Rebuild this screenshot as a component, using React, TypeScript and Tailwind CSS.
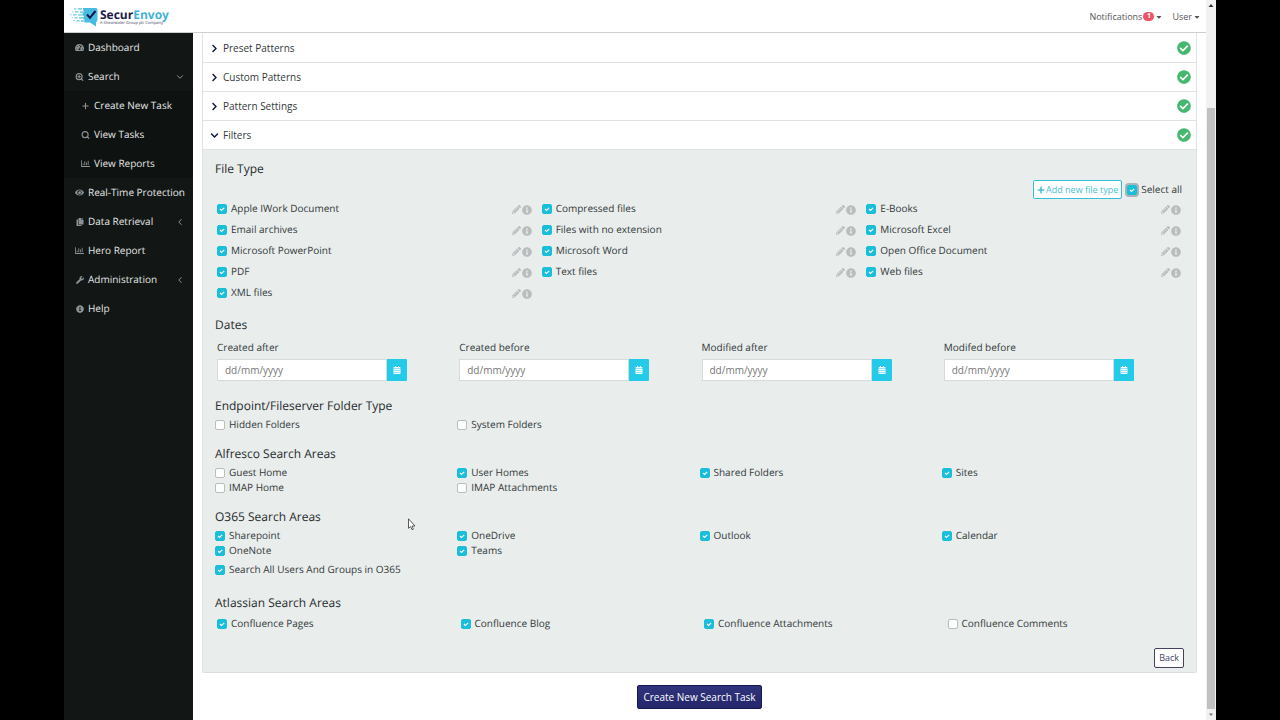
import { useState } from 'react';
import type { ReactNode } from 'react';
import {
  FaCalendarAlt,
  FaCaretDown,
  FaCheckCircle,
  FaChevronDown,
  FaChevronRight,
  FaCopy,
  FaEye,
  FaInfoCircle,
  FaPencilAlt,
  FaPlus,
  FaRegChartBar,
  FaTachometerAlt,
  FaWrench,
} from 'react-icons/fa';
import { ChevronDown, ChevronLeft, Plus, Search, ZoomIn } from 'lucide-react';

interface NavItem {
  label: string;
  icon: ReactNode;
  sub?: boolean;
  arrow?: 'down' | 'left';
}

interface Option {
  label: string;
  checked: boolean;
}

const navItems: NavItem[] = [
  { label: 'Dashboard', icon: <FaTachometerAlt size={9} /> },
  { label: 'Search', icon: <ZoomIn size={10} strokeWidth={3} />, arrow: 'down' },
  { label: 'Create New Task', icon: <Plus size={10} strokeWidth={3} />, sub: true },
  { label: 'View Tasks', icon: <Search size={10} strokeWidth={3} />, sub: true },
  { label: 'View Reports', icon: <FaRegChartBar size={9} />, sub: true },
  { label: 'Real-Time Protection', icon: <FaEye size={9} />, arrow: 'left' },
  { label: 'Data Retrieval', icon: <FaCopy size={8} />, arrow: 'left' },
  { label: 'Hero Report', icon: <FaRegChartBar size={9} /> },
  { label: 'Administration', icon: <FaWrench size={8} />, arrow: 'left' },
  { label: 'Help', icon: <FaInfoCircle size={8} /> },
];

const sections = ['Preset Patterns', 'Custom Patterns', 'Pattern Settings', 'Filters'];

const fileTypes = [
  'Apple IWork Document',
  'Compressed files',
  'E-Books',
  'Email archives',
  'Files with no extension',
  'Microsoft Excel',
  'Microsoft PowerPoint',
  'Microsoft Word',
  'Open Office Document',
  'PDF',
  'Text files',
  'Web files',
  'XML files',
];

const dates = ['Created after', 'Created before', 'Modified after', 'Modifed before'];

const folderTypes: Option[] = [
  { label: 'Hidden Folders', checked: false },
  { label: 'System Folders', checked: false },
];

const alfresco: Option[] = [
  { label: 'Guest Home', checked: false },
  { label: 'User Homes', checked: true },
  { label: 'Shared Folders', checked: true },
  { label: 'Sites', checked: true },
  { label: 'IMAP Home', checked: false },
  { label: 'IMAP Attachments', checked: false },
];

const o365: Option[] = [
  { label: 'Sharepoint', checked: true },
  { label: 'OneDrive', checked: true },
  { label: 'Outlook', checked: true },
  { label: 'Calendar', checked: true },
  { label: 'OneNote', checked: true },
  { label: 'Teams', checked: true },
];

const atlassian: Option[] = [
  { label: 'Confluence Pages', checked: true },
  { label: 'Confluence Blog', checked: true },
  { label: 'Confluence Attachments', checked: true },
  { label: 'Confluence Comments', checked: false },
];

function Logo() {
  return (
    <a href="#" className="flex items-center gap-[2px] pt-px">
      <svg width="29" height="20" viewBox="0 0 29 20">
        <path d="M14 1h12.500a2 2 0 0 1 2 2v10a2 2 0 0 1-2 2H27v4.500L21 15.500h-6l1-2.500-2-1 1-3-2-1 1.500-3z" fill="#45bce0" />
        <path
          d="M9 1h4v1.800H9zM5 1.200h2.500v1.200H5zM11 4.200h3v1.800h-3zM6 4h3.500v1.500H6zM3 4.500h1.500v1H3zM9 7.200h4.500v1.600H9zM4 7h3.500v1.500H4zM1 7.300h1.500v1H1zM10 10h5v1.800h-5zM5.500 10h3v1.500h-3zM2.500 10.300H4v1H2.500zM12 13h4v1.800h-4zM7.500 13h3v1.400h-3zM4 13h1.800v1H4z"
          fill="#7fd0e8"
        />
        <path d="M18 7.500l3 3.300L26.500 4" fill="none" stroke="#15154a" strokeWidth="2" />
      </svg>
      <span className="flex flex-col pt-[2px]">
        <span className="text-[12px] leading-3 font-bold text-[#1b1b4b]">
          Secur<span className="text-[#3fb3d9]">Envoy</span>
        </span>
        <span className="text-[4px] leading-[5px] text-[#3b3b5c]">A Shearwater Group plc Company</span>
      </span>
    </a>
  );
}

function Header() {
  return (
    <header className="flex h-[33px] items-center justify-between border-b border-[#cfcfcf] bg-white px-[5px]">
      <Logo />
      <div className="flex items-center gap-[9px] pt-px text-[9px] text-[#555]">
        <button className="flex items-center gap-px">
          Notifications
          <span className="flex h-[9px] w-[11px] items-center justify-center rounded-full bg-[#ed5565] text-[7px] font-bold text-white">
            1
          </span>
          <FaCaretDown size={8} />
        </button>
        <button className="flex items-center gap-px">
          User
          <FaCaretDown size={8} />
        </button>
      </div>
    </header>
  );
}

function Sidebar() {
  return (
    <nav className="w-[129px] shrink-0 bg-[#121615] text-[10px] text-[#e4e6e6]">
      {navItems.map((item) => (
        <a
          key={item.label}
          href="#"
          className={`flex h-[29px] items-center pr-[8px] whitespace-nowrap ${
            item.sub ? 'bg-[#0e1211] pl-[17px]' : 'pl-[11px]'
          }`}
        >
          <span className="flex w-[9px] shrink-0 justify-center text-[#8b9293]">{item.icon}</span>
          <span className="ml-[4px] min-w-0 flex-1">{item.label}</span>
          {item.arrow === 'down' && <ChevronDown size={10} className="shrink-0 text-[#a8adad]" />}
          {item.arrow === 'left' && <ChevronLeft size={10} className="shrink-0 text-[#a8adad]" />}
        </a>
      ))}
    </nav>
  );
}

function Checkbox({ label, checked, focused = false }: Option & { focused?: boolean }) {
  const [on, setOn] = useState(checked);
  return (
    <label className="flex items-center gap-[4px]">
      <span className="relative flex">
        <input
          type="checkbox"
          checked={on}
          onChange={() => setOn(!on)}
          className={`size-[10px] appearance-none rounded-[2px] border border-[#b9bebf] bg-white checked:border-[#19bfd8] checked:bg-[#19bfd8] ${
            focused ? 'ring-2 ring-[#a9b4b6]' : ''
          }`}
        />
        {on && (
          <svg viewBox="0 0 10 10" className="pointer-events-none absolute inset-0 size-[10px]">
            <path d="M3 5l1.500 1.500L7.200 3.800" fill="none" stroke="#fff" strokeWidth="1.200" />
          </svg>
        )}
      </span>
      {label}
    </label>
  );
}

function Heading({ children, className = '' }: { children: ReactNode; className?: string }) {
  return <h2 className={`text-[12px] leading-5 text-[#262b2c] ${className}`}>{children}</h2>;
}

function OptionGrid({ options }: { options: Option[] }) {
  return (
    <div className="mt-px grid auto-rows-[15px] grid-cols-4 items-center">
      {options.map((option) => (
        <Checkbox key={option.label} {...option} />
      ))}
    </div>
  );
}

function DateField({ label }: { label: string }) {
  const id = label.toLowerCase().replace(' ', '-');
  return (
    <div className="pl-[2px]">
      <label htmlFor={id} className="block leading-4">
        {label}
      </label>
      <div className="mt-1 flex h-[22px] w-[190px]">
        <input
          id={id}
          placeholder="dd/mm/yyyy"
          className="min-w-0 flex-1 border border-[#d5dadb] bg-white px-[7px] placeholder:text-[#777]"
        />
        <button aria-label={`Pick ${label}`} className="flex w-5 items-center justify-center rounded-r-[1px] bg-[#23cbe8] text-white">
          <FaCalendarAlt size={8} />
        </button>
      </div>
    </div>
  );
}

function Filters() {
  return (
    <div className="rounded-b-[2px] border-b border-[#d9dddd] bg-[#e9edec] px-[12px] pt-[9px] pb-1">
      <Heading>File Type</Heading>
      <div className="mt-px mr-[2px] flex items-center justify-end gap-[5px]">
        <button className="flex h-[19px] items-center gap-px rounded-[2px] border border-[#35bfd9] bg-white px-[3px] text-[9px] text-[#45bfd5]">
          <FaPlus size={8} />
          Add new file type
        </button>
        <Checkbox label="Select all" checked focused />
      </div>
      <div className="-mt-px -mr-[7px] ml-[2px] grid auto-rows-[21px] grid-cols-3">
        {fileTypes.map((type) => (
          <div key={type} className="flex items-center justify-between pr-[10px]">
            <Checkbox label={type} checked />
            <span className="flex items-center gap-px pt-[2px] text-[#b9bdbd]">
              <button aria-label={`Edit ${type}`}>
                <FaPencilAlt size={9} />
              </button>
              <button aria-label={`About ${type}`}>
                <FaInfoCircle size={10} />
              </button>
            </span>
          </div>
        ))}
      </div>

      <Heading className="mt-[12px]">Dates</Heading>
      <div className="mt-1 grid grid-cols-4">
        {dates.map((label) => (
          <DateField key={label} label={label} />
        ))}
      </div>

      <Heading className="mt-[15px]">Endpoint/Fileserver Folder Type</Heading>
      <OptionGrid options={folderTypes} />

      <Heading className="mt-[12px]">Alfresco Search Areas</Heading>
      <OptionGrid options={alfresco} />

      <Heading className="mt-[12px]">O365 Search Areas</Heading>
      <OptionGrid options={o365} />
      <div className="mt-[4px] flex h-[15px] items-center">
        <Checkbox label="Search All Users And Groups in O365" checked />
      </div>

      <Heading className="mt-4">Atlassian Search Areas</Heading>
      <div className="-mr-[7px] ml-[2px] pt-[2px]">
        <OptionGrid options={atlassian} />
      </div>

      <div className="mt-[17px] flex justify-end">
        <button className="h-5 rounded-[2px] border border-[#43435f] bg-white px-[4px] text-[9px] text-[#43435f]">Back</button>
      </div>
    </div>
  );
}

function Scrollbar() {
  return (
    <div className="flex w-[10px] shrink-0 flex-col items-center bg-[#f1f1f1]" aria-hidden="true">
      <svg width="10" height="11" viewBox="0 0 10 11">
        <path d="M2.500 7L5 4l2.500 3z" fill="#333" />
      </svg>
      <div className="h-[97px]" />
      <div className="w-[8px] flex-1 bg-[#c1c1c1]" />
      <svg width="10" height="11" viewBox="0 0 10 11">
        <path d="M3 4.500L5 7l2-2.500z" fill="#777" />
      </svg>
    </div>
  );
}

export default function App() {
  const [open, setOpen] = useState('Filters');

  return (
    <div className="flex min-h-screen bg-black px-[5%] font-['Open_Sans','Noto_Sans',sans-serif] text-[10px] text-[#33393a] [text-rendering:geometricPrecision]">
      <div className="flex min-w-0 flex-1 flex-col bg-white">
        <Header />
        <div className="flex flex-1">
          <Sidebar />
          <main className="min-w-0 flex-1 px-[9px]">
            <div className="border-x border-[#dfe3e3] pt-px">
              {sections.map((name) => (
                <div key={name}>
                  <button
                    onClick={() => setOpen(name === open ? '' : name)}
                    className="flex h-[29px] w-full items-center border-b border-[#dfe3e3] pr-[5px] pl-[6px]"
                  >
                    <span className="flex w-[10px] justify-center text-[#14143c]">
                      {open === name ? <FaChevronDown size={9} /> : <FaChevronRight size={9} />}
                    </span>
                    <span className="ml-[4px] flex-1 text-left">{name}</span>
                    <FaCheckCircle size={14} className="text-[#45b76f]" />
                  </button>
                  {name === 'Filters' && open === name && <Filters />}
                </div>
              ))}
            </div>
            <div className="flex justify-center pt-[12px] pb-[10px]">
              <button className="h-6 rounded-[2px] border border-[#17174f] bg-linear-to-b from-[#30347c] to-[#24266a] px-[5px] text-white">
                Create New Search Task
              </button>
            </div>
          </main>
        </div>
      </div>
      <Scrollbar />
      {/* mouse pointer */}
      <svg className="pointer-events-none absolute top-[518px] left-[408px]" width="8" height="13" viewBox="0 0 8 13">
        <path d="M.5 .8v9.500l2-1.800 1.500 3.200 1.400-.6L4 8h3z" fill="#fff" stroke="#333" strokeWidth=".8" />
      </svg>
    </div>
  );
}
